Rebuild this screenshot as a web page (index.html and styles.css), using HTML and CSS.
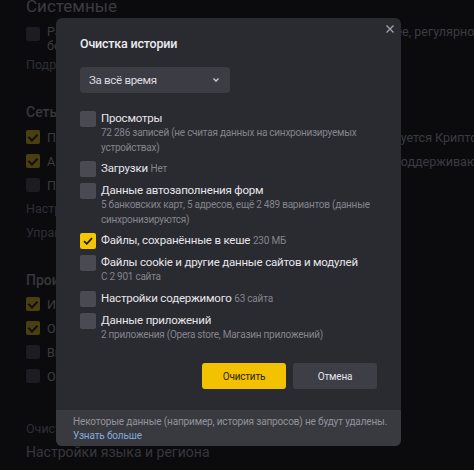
FILE: index.html
```html
<!DOCTYPE html>
<html lang="ru">
<head>
<meta charset="utf-8">
<title>Очистка истории</title>
<link rel="stylesheet" href="styles.css">
</head>
<body>
<div class="page">
  <div class="page-title">Системные</div>
  <div class="opt opt-multi"><span class="cb"></span><div class="opt-text">Разрешить работу в фоновом режиме после закрытия в трее, регулярно сохранять данные<br>без открытых окон</div></div>
  <div class="plink">Подробнее</div>
  <div class="sec sec-net">Сеть</div>
  <div class="opt"><span class="cb on"></span><span class="opt-text">Подключаться к веб-сайтам с шифрованием по ГОСТу. Требуется КриптоПро CSP</span></div>
  <div class="opt"><span class="cb on"></span><span class="opt-text">Автоматически устанавливать защищённое соединение с поддерживающими его сайтами</span></div>
  <div class="opt"><span class="cb"></span><span class="opt-text">Проверять сертификаты сайтов</span></div>
  <div class="plink">Настройки прокси-сервера</div>
  <div class="plink">Управление сертификатами</div>
  <div class="sec sec-perf">Производительность</div>
  <div class="opt"><span class="cb on"></span><span class="opt-text">Использовать аппаратное ускорение</span></div>
  <div class="opt"><span class="cb on"></span><span class="opt-text">Оптимизировать изображения</span></div>
  <div class="opt"><span class="cb"></span><span class="opt-text">Выгружать из памяти неиспользуемые вкладки</span></div>
  <div class="opt"><span class="cb"></span><span class="opt-text">Обновлять браузер, даже если он не запущен</span></div>
  <div class="plink plink-clear">Очистить историю</div>
  <div class="sec sec-lang">Настройки языка и региона</div>
</div>

<div class="dialog">
  <svg class="close" width="10" height="10" viewBox="0 0 10 10"><path d="M1.5 1.5 L8.5 8.5 M8.5 1.5 L1.5 8.5" stroke="#a0a0a8" stroke-width="1.4" fill="none"/></svg>
  <div class="dialog-body">
    <div class="title">Очистка истории</div>
    <div class="select"><span>За всё время</span><svg width="8" height="6" viewBox="0 0 8 6"><path d="M1.5 1.5 L4 4 L6.5 1.5" stroke="#d0d0d6" stroke-width="1.3" fill="none"/></svg></div>
    <div class="items">
      <div class="item"><span class="box"></span><div class="item-text"><div class="label">Просмотры</div><div class="sub">72 286 записей (не считая данных на синхронизируемых<br>устройствах)</div></div></div>
      <div class="item"><span class="box"></span><div class="item-text"><div class="label">Загрузки <span class="meta">Нет</span></div></div></div>
      <div class="item"><span class="box"></span><div class="item-text"><div class="label">Данные автозаполнения форм</div><div class="sub">5 банковских карт, 5 адресов, ещё 2 489 вариантов (данные<br>синхронизируются)</div></div></div>
      <div class="item"><span class="box on"><svg width="16" height="16" viewBox="0 0 16 16"><path d="M4 8.2 L6.8 10.8 L12 5.2" stroke="#1b1b1b" stroke-width="1.8" fill="none"/></svg></span><div class="item-text"><div class="label">Файлы, сохранённые в кеше <span class="meta">230 МБ</span></div></div></div>
      <div class="item"><span class="box"></span><div class="item-text"><div class="label">Файлы cookie и другие данные сайтов и модулей</div><div class="sub">С 2 901 сайта</div></div></div>
      <div class="item"><span class="box"></span><div class="item-text"><div class="label">Настройки содержимого <span class="meta">63 сайта</span></div></div></div>
      <div class="item"><span class="box"></span><div class="item-text"><div class="label">Данные приложений</div><div class="sub">2 приложения (Opera store, Магазин приложений)</div></div></div>
    </div>
    <div class="actions">
      <button class="btn btn-primary">Очистить</button>
      <button class="btn btn-cancel">Отмена</button>
    </div>
  </div>
  <div class="footer">
    <div class="footer-text">Некоторые данные (например, история запросов) не будут удалены.</div>
    <div class="footer-link">Узнать больше</div>
  </div>
</div>
</body>
</html>
```

FILE: styles.css
```css
html, body {
  margin: 0;
  padding: 0;
  width: 474px;
  height: 470px;
  overflow: hidden;
  background: #0b0b0e;
}

body {
  font-family: Roboto, "Noto Sans", sans-serif;
  position: relative;
}

.page {
  width: 448px;
  overflow: hidden;
  padding-left: 26px;
  color: #3b3b40;
  font-size: 12.5px;
  white-space: nowrap;
}

.page-title {
  font-size: 17px;
  line-height: 24px;
  margin-top: -6px;
  height: 24px;
}

.opt {
  display: flex;
  align-items: center;
  height: 24px;
}

.opt-text {
  overflow: hidden;
}

.opt-multi {
  align-items: flex-start;
  height: auto;
  margin-top: 7px;
}

.opt-multi .opt-text {
  line-height: 14px;
}

.opt-multi .cb {
  margin-top: 2px;
}

.cb {
  width: 14px;
  height: 14px;
  border-radius: 2px;
  background: #1c1c21;
  flex: none;
  margin-right: 7px;
  position: relative;
}

.cb.on {
  background: #4a3f0e;
}

.cb.on::after {
  content: "";
  position: absolute;
  left: 4px;
  top: 2px;
  width: 4px;
  height: 7px;
  border: solid #0e0e0e;
  border-width: 0 2px 2px 0;
  transform: rotate(45deg);
}

.plink {
  height: 24px;
  line-height: 24px;
  color: #2d2e36;
}

.sec {
  font-size: 14px;
  font-weight: 500;
  height: 26px;
  line-height: 26px;
  color: #37373c;
}

.sec-net { margin-top: 22px; }
.sec-perf { margin-top: 23px; height: 24px; line-height: 24px; }
.plink-clear { margin-top: 29px; }
.sec-lang { font-weight: 400; height: 22px; line-height: 22px; }

/* dialog */
.dialog {
  position: absolute;
  left: 56px;
  top: 18px;
  width: 345px;
  height: 428px;
  background: #2a2a31;
  border-radius: 6px;
  overflow: hidden;
  display: flex;
  flex-direction: column;
  color: #e4e4e8;
  white-space: nowrap;
}

.close {
  position: absolute;
  right: 6px;
  top: 6px;
}

.dialog-body {
  flex: 1;
  padding: 16px 24px 0 24px;
}

.title {
  font-size: 12.5px;
  letter-spacing: -0.2px;
  font-weight: 500;
  line-height: 20px;
  color: #ececf0;
}

.select {
  margin-top: 13px;
  width: 150px;
  height: 26px;
  box-sizing: border-box;
  background: #3c3c44;
  border-radius: 4px;
  display: flex;
  align-items: center;
  justify-content: space-between;
  padding: 0 10px 0 9px;
  font-size: 11.5px;
  letter-spacing: -0.3px;
  color: #dcdce0;
}

.items {
  margin-top: 18px;
  display: flex;
  flex-direction: column;
  gap: 6px;
}

.item {
  display: flex;
  align-items: flex-start;
}

.box {
  width: 16px;
  height: 16px;
  border-radius: 2px;
  background: #4a4a52;
  flex: none;
  margin-right: 5px;
  display: flex;
}

.box.on {
  background: #f6c600;
}

.label {
  font-size: 11.5px;
  letter-spacing: -0.2px;
  line-height: 15px;
  color: #e6e6ea;
}

.meta {
  font-size: 10px;
  letter-spacing: -0.2px;
  color: #84848c;
}

.sub {
  font-size: 10px;
  letter-spacing: -0.25px;
  line-height: 14.5px;
  color: #84848c;
}

.actions {
  margin-top: 21px;
  display: flex;
  justify-content: flex-end;
  gap: 7px;
}

.btn {
  width: 84px;
  height: 26px;
  border: none;
  border-radius: 3px;
  font-family: inherit;
  font-size: 10px;
  letter-spacing: -0.2px;
  padding: 0;
}

.btn-primary {
  background: #f2c200;
  color: #2b2300;
}

.btn-cancel {
  background: #3e3e46;
  color: #e4e4e8;
}

.footer {
  background: #393940;
  height: 36px;
  box-sizing: border-box;
  padding: 5px 17px 0 17px;
  font-size: 10px;
  letter-spacing: -0.15px;
  line-height: 14px;
}

.footer-text {
  color: #93939b;
}

.footer-link {
  color: #84a8dc;
}
```
